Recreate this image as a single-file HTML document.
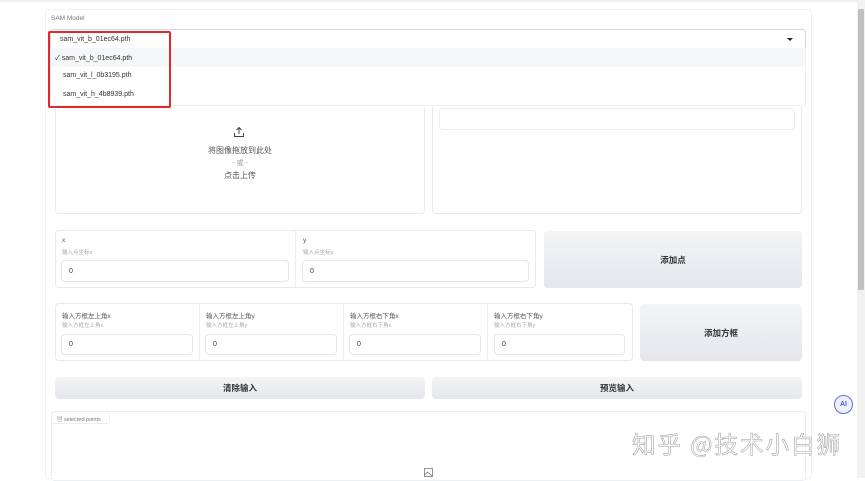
<!DOCTYPE html>
<html><head><meta charset="utf-8"><style>
*{box-sizing:border-box;margin:0;padding:0}
body{width:865px;height:478px;overflow:hidden;background:#fff;font-family:"Liberation Sans","Noto Sans CJK SC",sans-serif;position:relative;color:#374151}
.a{position:absolute}
.box{position:absolute;border:1px solid #e8eaee;border-radius:4px;background:#fff}
.inp{position:absolute;border:1px solid #e5e7eb;border-radius:4px;background:#fff;font-size:7px;padding-left:7px;display:flex;align-items:center;color:#333}
.btn{position:absolute;border-radius:4px;background:linear-gradient(#f3f4f6,#e5e7eb);font-size:8.5px;font-weight:bold;color:#333;display:flex;align-items:center;justify-content:center}
.lb{position:absolute;font-size:6.5px;color:#555}
.sl{position:absolute;font-size:5.5px;color:#aaa}
</style></head><body>
<div class="a" style="left:0;top:0;width:857px;height:2px;background:#eef0f3"></div>
<div class="box" style="left:45px;top:9px;width:767px;height:470px;border-color:#f0f1f4"></div>
<div class="lb" style="left:51px;top:15px;color:#777">SAM Model</div>

<div class="box" style="left:55px;top:105px;width:370px;height:109px;border-top:none"></div>
<svg class="a" style="left:233px;top:126px" width="12" height="12" viewBox="0 0 12 12" fill="none" stroke="#444" stroke-width="1"><path d="M6 8V1.5M3.5 4L6 1.5 8.5 4M1.5 7v3.5h9V7"/></svg>
<div class="a" style="left:55px;top:145px;width:370px;text-align:center;font-size:8px;line-height:12px;color:#555">将图像拖放到此处<br><span style="font-size:7px;color:#999">- 或 -</span><br>点击上传</div>
<div class="box" style="left:432px;top:105px;width:370px;height:109px;border-top:none"></div>
<div class="inp" style="left:439px;top:108px;width:356px;height:22px;border-color:#eceef1"></div>

<div class="inp" style="left:50px;top:29px;width:756px;height:21px;border-color:#cfd9ea;padding-left:9px;font-size:7px">sam_vit_b_01ec64.pth</div>
<div class="a" style="left:787px;top:38px;width:0;height:0;border-left:3px solid transparent;border-right:3px solid transparent;border-top:3px solid #222"></div>
<div class="a" style="left:50px;top:48px;width:756px;height:58px;background:#fff;border:1px solid #eef0f3"></div>
<div class="a" style="left:51px;top:48px;width:754px;height:19px;background:#f6f7f9"></div>
<div class="a" style="left:55px;top:53px;font-size:7px;color:#333">✓ sam_vit_b_01ec64.pth</div>
<div class="a" style="left:63px;top:72px;font-size:7px;color:#333">sam_vit_l_0b3195.pth</div>
<div class="a" style="left:63px;top:91px;font-size:7px;color:#333">sam_vit_h_4b8939.pth</div>
<div class="a" style="left:48px;top:31px;width:123px;height:77px;border:2px solid #e0292b;border-radius:2px;z-index:5"></div>

<div class="box" style="left:55px;top:230px;width:481px;height:58px"></div>
<div class="a" style="left:295px;top:231px;width:1px;height:56px;background:#eceef1"></div>
<div class="lb" style="left:62px;top:237px">x</div><div class="sl" style="left:62px;top:248px">输入点坐标x</div>
<div class="inp" style="left:61px;top:260px;width:228px;height:22px">0</div>
<div class="lb" style="left:303px;top:237px">y</div><div class="sl" style="left:303px;top:248px">输入点坐标y</div>
<div class="inp" style="left:302px;top:260px;width:227px;height:22px">0</div>
<div class="btn" style="left:544px;top:231px;width:258px;height:57px">添加点</div>

<div class="box" style="left:55px;top:303px;width:578px;height:58px"></div>
<div class="a" style="left:199px;top:304px;width:1px;height:56px;background:#eceef1"></div>
<div class="a" style="left:343px;top:304px;width:1px;height:56px;background:#eceef1"></div>
<div class="a" style="left:487px;top:304px;width:1px;height:56px;background:#eceef1"></div>
<div class="lb" style="left:62px;top:310px">输入方框左上角x</div><div class="sl" style="left:62px;top:321px">输入方框左上角x</div>
<div class="inp" style="left:61px;top:334px;width:132px;height:21px">0</div>
<div class="lb" style="left:206px;top:310px">输入方框左上角y</div><div class="sl" style="left:206px;top:321px">输入方框左上角y</div>
<div class="inp" style="left:205px;top:334px;width:132px;height:21px">0</div>
<div class="lb" style="left:350px;top:310px">输入方框右下角x</div><div class="sl" style="left:350px;top:321px">输入方框右下角x</div>
<div class="inp" style="left:349px;top:334px;width:132px;height:21px">0</div>
<div class="lb" style="left:494px;top:310px">输入方框右下角y</div><div class="sl" style="left:494px;top:321px">输入方框右下角y</div>
<div class="inp" style="left:494px;top:334px;width:131px;height:21px">0</div>
<div class="btn" style="left:640px;top:304px;width:162px;height:57px">添加方框</div>

<div class="btn" style="left:55px;top:377px;width:370px;height:22px">清除输入</div>
<div class="btn" style="left:432px;top:377px;width:370px;height:22px">预览输入</div>

<div class="box" style="left:51px;top:411px;width:755px;height:70px;border-color:#eceef1"></div>
<div class="a" style="left:51px;top:411px;width:59px;height:13px;border:1px solid #eceef1;border-radius:3px;font-size:5.5px;color:#777;padding:3px 0 0 5px">▤ selected points</div>
<svg class="a" style="left:424px;top:468px" width="9" height="9" viewBox="0 0 9 9" fill="none" stroke="#777" stroke-width=".8"><rect x=".5" y=".5" width="8" height="8"/><path d="M.5 7l3-3 5 4.5M6 2.5h.5"/></svg>

<div class="a" style="left:632px;top:426px;font-size:23.5px;letter-spacing:2px;color:#fff;-webkit-text-stroke:0.6px #a8a8a8;font-family:'Noto Sans CJK SC',sans-serif;white-space:nowrap">知乎 @技术小白狮</div>

<div class="a" style="left:834px;top:395px;width:19px;height:19px;border-radius:50%;border:1.5px solid #5b6ee0;background:#eef1fb;font-size:7px;font-weight:bold;color:#4a5bd0;display:flex;align-items:center;justify-content:center">AI</div>

<div class="a" style="left:857px;top:0;width:8px;height:478px;background:#f1f1f1"></div>
<div class="a" style="left:858px;top:9px;width:6px;height:281px;background:#c1c1c1;border-radius:1px"></div>
</body></html>
